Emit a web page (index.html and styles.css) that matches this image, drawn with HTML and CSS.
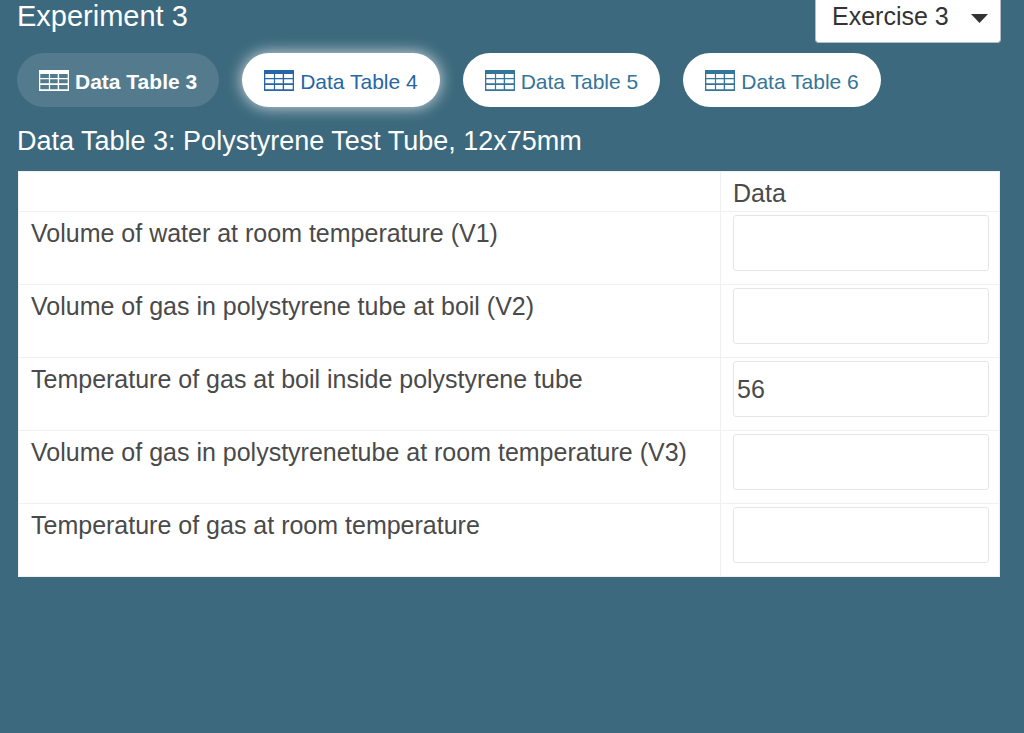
FILE: index.html
```html
<!DOCTYPE html>
<html lang="en">
<head>
<meta charset="utf-8">
<meta name="viewport" content="width=device-width, initial-scale=1">
<title>Experiment 3</title>
<link rel="stylesheet" href="styles.css">
</head>
<body>
<svg class="sprite" aria-hidden="true">
  <symbol id="grid" viewBox="0 0 30 21">
    <path fill="currentColor" fill-rule="evenodd" d="M0 0H30V21H0ZM1.3 4V8H9.9V4ZM11.1 4V8H18.7V4ZM20.1 4V8H28.7V4ZM1.3 9.2V13.3H9.9V9.2ZM11.1 9.2V13.3H18.7V9.2ZM20.1 9.2V13.3H28.7V9.2ZM1.3 15V19.2H9.9V15ZM11.1 15V19.2H18.7V15ZM20.1 15V19.2H28.7V15Z"/>
  </symbol>
</svg>
<header class="header">
  <h1 class="experiment">Experiment 3</h1>
  <div class="picker">
    <select class="picker-select" aria-label="Exercise">
      <option>Exercise 3</option>
    </select>
    <svg class="picker-arrow" viewBox="0 0 17 9" aria-hidden="true"><path fill="currentColor" d="M0 0H17L8.5 9Z"/></svg>
  </div>
</header>
<main>
  <nav class="tabs" aria-label="Data tables">
    <button class="tab tab-current" type="button" aria-current="true"><svg class="tab-icon" aria-hidden="true"><use href="#grid"/></svg><span class="tab-label">Data Table 3</span></button>
    <button class="tab tab-glow" type="button"><svg class="tab-icon" aria-hidden="true"><use href="#grid"/></svg><span class="tab-label">Data Table 4</span></button>
    <button class="tab" type="button"><svg class="tab-icon" aria-hidden="true"><use href="#grid"/></svg><span class="tab-label">Data Table 5</span></button>
    <button class="tab" type="button"><svg class="tab-icon" aria-hidden="true"><use href="#grid"/></svg><span class="tab-label">Data Table 6</span></button>
  </nav>
  <h2 class="title">Data Table 3: Polystyrene Test Tube, 12x75mm</h2>
  <table class="data">
    <thead>
      <tr><td></td><th class="value" scope="col">Data</th></tr>
    </thead>
    <tbody>
      <tr><th scope="row"><label for="v1">Volume of water at room temperature (V1)</label></th><td><input class="field" id="v1" type="text"></td></tr>
      <tr><th scope="row"><label for="v2">Volume of gas in polystyrene tube at boil (V2)</label></th><td><input class="field" id="v2" type="text"></td></tr>
      <tr><th scope="row"><label for="t1">Temperature of gas at boil inside polystyrene tube</label></th><td><input class="field" id="t1" type="text" value="56"></td></tr>
      <tr><th scope="row"><label for="v3">Volume of gas in polystyrenetube at room temperature (V3)</label></th><td><input class="field" id="v3" type="text"></td></tr>
      <tr><th scope="row"><label for="t2">Temperature of gas at room temperature</label></th><td><input class="field" id="t2" type="text"></td></tr>
    </tbody>
  </table>
</main>
</body>
</html>
```
FILE: styles.css
```css
* {
  box-sizing: border-box;
}

body {
  margin: 0;
  padding: 0 25px 24px 17px;
  background: #3c697d;
  color: #fff;
  font-family: "Liberation Sans", Arial, sans-serif;
}

.sprite {
  display: none;
}

.header {
  display: flex;
  justify-content: space-between;
  align-items: flex-start;
  margin-right: -2px;
}

.experiment {
  margin: 0;
  font-size: 29px;
  line-height: 32px;
  font-weight: 400;
}

.picker {
  position: relative;
}

.picker-select {
  appearance: none;
  display: block;
  height: 43px;
  padding: 0 51px 10px 16px;
  border: 1px solid #b5bdc1;
  border-top: 0;
  border-radius: 0 0 4px 4px;
  background: #fff;
  color: #333;
  font: 25px/30px "Liberation Sans", Arial, sans-serif;
}

.picker-arrow {
  position: absolute;
  top: 14px;
  right: 13px;
  width: 17px;
  height: 9px;
  color: #333;
  pointer-events: none;
}

.tabs {
  display: flex;
  flex-wrap: wrap;
  gap: 23px;
  margin-top: 10px;
}

.tab {
  display: flex;
  align-items: center;
  gap: 6px;
  height: 54px;
  padding: 0 22px;
  border: 0;
  border-radius: 27px;
  background: #fff;
  color: #34759a;
  font: 21px/28px "Liberation Sans", Arial, sans-serif;
}

.tab-current {
  background: #537b8d;
  color: #fff;
  font-weight: 700;
}

.tab-glow {
  color: #2666a5;
  box-shadow: 0 0 16px rgba(255, 255, 255, 0.8);
}

.tab-icon {
  width: 30px;
  height: 21px;
}

.tab-label {
  padding-top: 4px;
}

.title {
  margin: 18px 0 14px;
  font-size: 27px;
  line-height: 32px;
  font-weight: 400;
}

.data {
  width: 100%;
  margin-left: 1px;
  border-collapse: collapse;
  background: #fff;
  color: #4a4a4a;
  font-size: 25px;
  line-height: 30px;
}

.data th,
.data td {
  padding: 3px 10px 13px 12px;
  border: 1px solid #f0f0f0;
  text-align: left;
  vertical-align: top;
  font-weight: 400;
}

.data tbody th {
  padding-top: 6px;
}

.data thead th,
.data thead td {
  padding-top: 6px;
  padding-bottom: 3px;
}

.data .value {
  width: 279px;
}

.field {
  display: block;
  width: 100%;
  height: 56px;
  padding: 0 3px;
  border: 1px solid #e6e6e6;
  border-radius: 3px;
  background: #fff;
  color: #4a4a4a;
  font: 25px/30px "Liberation Sans", Arial, sans-serif;
}
```
